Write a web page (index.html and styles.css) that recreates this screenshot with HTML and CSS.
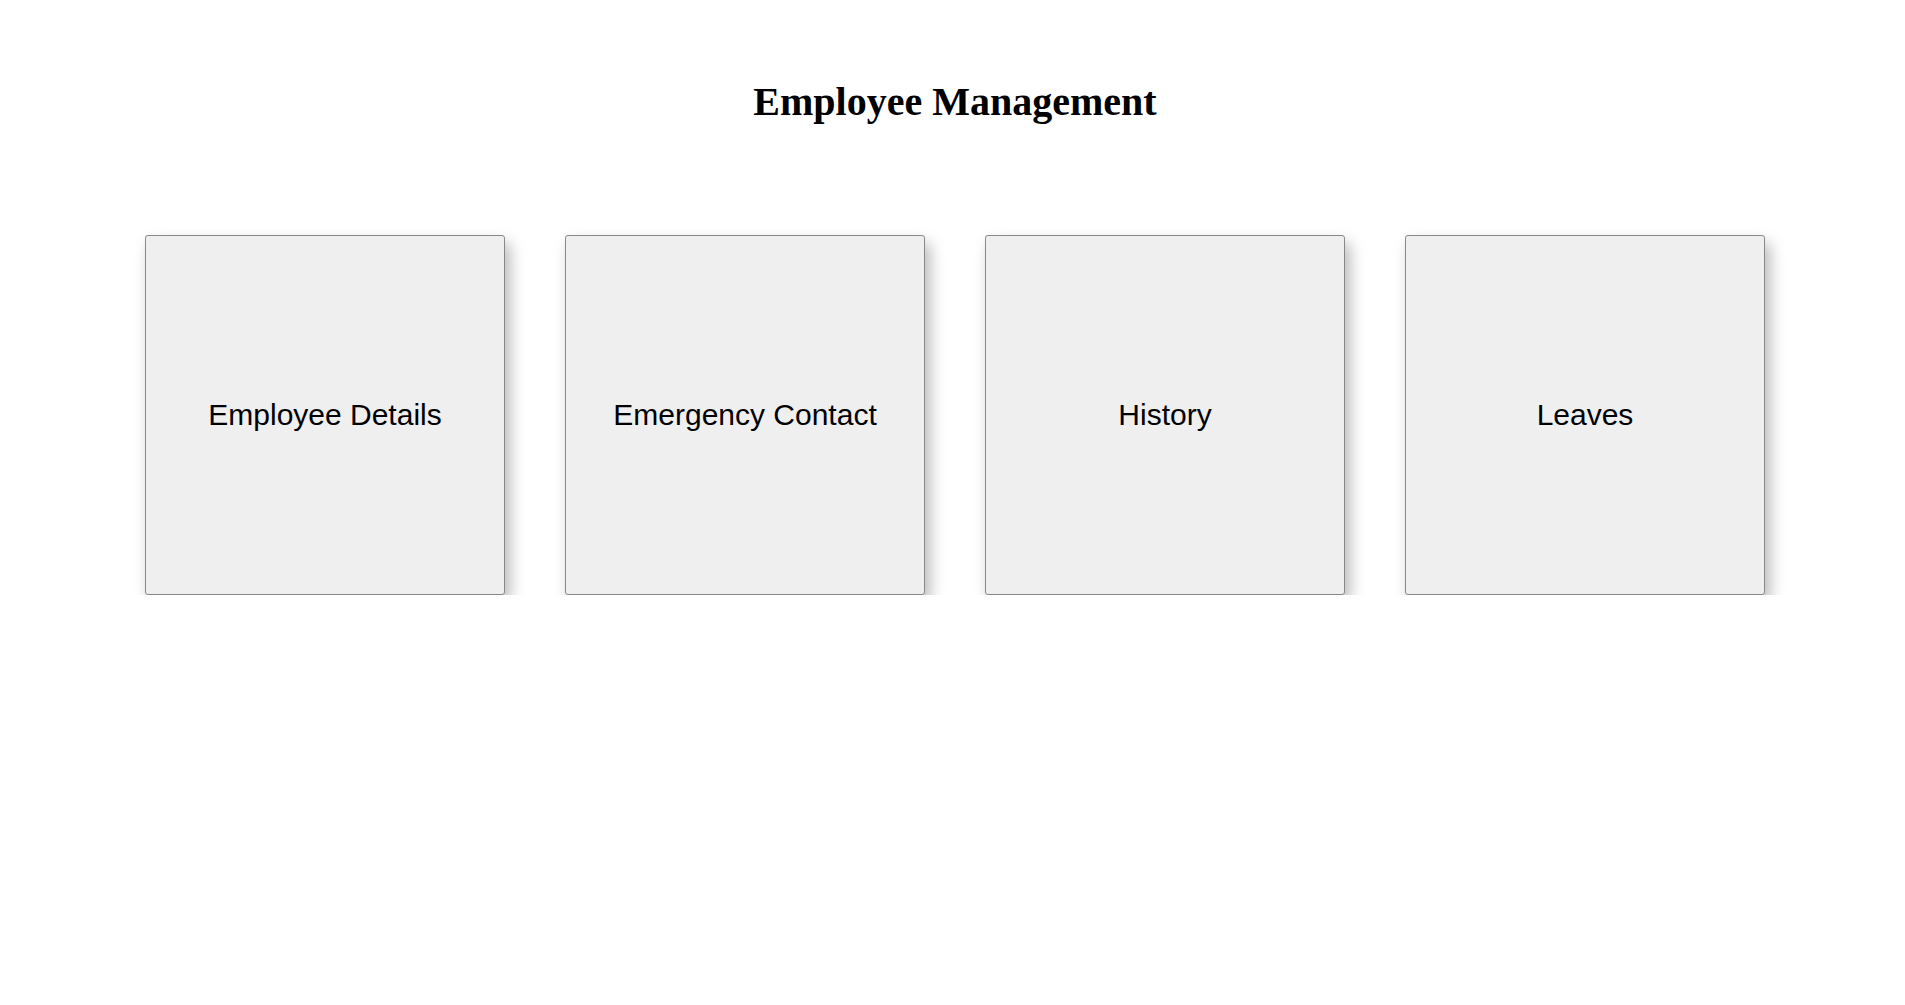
FILE: index.html
```html
<!DOCTYPE html>
<html lang="en">
<head>
<meta charset="utf-8">
<title>Employee Management</title>
<link rel="stylesheet" href="styles.css">
</head>
<body>
<div class="page">
  <h1 class="title">Employee Management</h1>
  <div class="cards">
    <div class="card">Employee Details</div>
    <div class="card">Emergency Contact</div>
    <div class="card">History</div>
    <div class="card">Leaves</div>
  </div>
</div>
</body>
</html>
```
FILE: styles.css
```css
html, body {
  margin: 0;
  padding: 0;
  background: #ffffff;
}

.page {
  padding: 80px 0 0 5px;
}

.title {
  margin: 0 0 111px;
  font-family: "Liberation Serif", "Times New Roman", serif;
  font-size: 40px;
  font-weight: bold;
  line-height: 44px;
  text-align: center;
  color: #000;
}

.cards {
  display: flex;
  justify-content: center;
  gap: 60px;
}

.card {
  box-sizing: border-box;
  width: 360px;
  height: 360px;
  display: flex;
  align-items: center;
  justify-content: center;
  background: #efefef;
  border: 1px solid #888888;
  border-radius: 3px;
  box-shadow: 5px 8px 15px rgba(0, 0, 0, 0.28);
  font-family: "Liberation Sans", Arial, sans-serif;
  font-size: 30px;
  color: #000;
}
```
